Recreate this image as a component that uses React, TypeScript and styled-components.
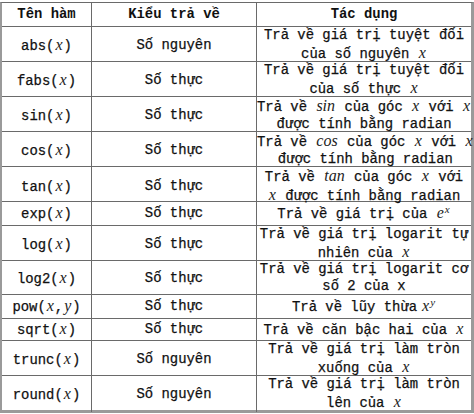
import React from 'react';
import styled, { createGlobalStyle } from 'styled-components';

const GlobalStyle = createGlobalStyle`
  html, body {
    margin: 0;
    padding: 0;
    background: #ffffff;
  }
`;

type Seg = string | { m: string; sup?: string; gap?: boolean };

type Row = {
  name: Seg[];
  kind: string;
  desc: Seg[][];
  h: number;
};

const X = { m: 'x' };

const rows: Row[] = [
  { name: ['abs(', X, ')'], kind: 'Số nguyên', desc: [['Trả về giá trị tuyệt đối'], ['của số nguyên ', X]], h: 35 },
  { name: ['fabs(', X, ')'], kind: 'Số thực', desc: [['Trả về giá trị tuyệt đối'], ['của số thực ', X]], h: 35 },
  { name: ['sin(', X, ')'], kind: 'Số thực', desc: [['Trả về ', { m: 'sin' }, ' của góc ', X, ' với ', X], ['được tính bằng radian']], h: 35 },
  { name: ['cos(', X, ')'], kind: 'Số thực', desc: [['Trả về ', { m: 'cos' }, ' của góc ', X, ' với ', X], ['được tính bằng radian']], h: 35 },
  { name: ['tan(', X, ')'], kind: 'Số thực', desc: [['Trả về ', { m: 'tan' }, ' của góc ', X, ' với'], [X, ' được tính bằng radian']], h: 35 },
  { name: ['exp(', X, ')'], kind: 'Số thực', desc: [['Trả về giá trị của ', { m: 'e', sup: 'x' }]], h: 24 },
  { name: ['log(', X, ')'], kind: 'Số thực', desc: [['Trả về giá trị logarit tự'], ['nhiên của ', X]], h: 35 },
  { name: ['log2(', X, ')'], kind: 'Số thực', desc: [['Trả về giá trị logarit cơ'], ['số 2 của x']], h: 34 },
  { name: ['pow(', X, ',', { m: 'y' }, ')'], kind: 'Số thực', desc: [['Trả về lũy thừa', { m: 'x', sup: 'y', gap: true }]], h: 24 },
  { name: ['sqrt(', X, ')'], kind: 'Số thực', desc: [['Trả về căn bậc hai của ', X]], h: 22 },
  { name: ['trunc(', X, ')'], kind: 'Số nguyên', desc: [['Trả về giá trị làm tròn'], ['xuống của ', X]], h: 35 },
  { name: ['round(', X, ')'], kind: 'Số nguyên', desc: [['Trả về giá trị làm tròn'], ['lên của ', X]], h: 35 },
];

const Frame = styled.div`
  width: 474px;
  height: 414px;
  box-sizing: border-box;
  padding-top: 2px;
  background: #ffffff;
  font-family: 'Liberation Mono', 'DejaVu Sans Mono', monospace;
  font-size: 13.9px;
  color: #111111;
`;

const Table = styled.div`
  display: flex;
  flex-direction: column;
  border-top: 1px solid #6a6a6a;
  border-left: 2px solid #9a9a9a;
  border-right: 3px solid #9a9a9a;
  border-bottom: 3px solid #9a9a9a;
`;

const TableRow = styled.div<{ $h: number }>`
  display: grid;
  grid-template-columns: 90px 165px 1fr;
  height: ${(p) => p.$h}px;
  box-sizing: border-box;
  border-bottom: 1px solid #6a6a6a;

  &:last-child {
    border-bottom: none;
    height: ${(p) => p.$h - 1}px;
  }
`;

const Cell = styled.div<{ $bold?: boolean; $last?: boolean }>`
  display: flex;
  flex-direction: column;
  align-items: center;
  justify-content: center;
  text-align: center;
  line-height: 17px;
  white-space: pre;
  font-weight: ${(p) => (p.$bold ? 700 : 400)};
  -webkit-text-stroke: ${(p) => (p.$bold ? '0' : '0.25px #111111')};
  border-right: ${(p) => (p.$last ? 'none' : '1px solid #6a6a6a')};
`;

const Line = styled.div`
  white-space: pre;
`;

const Math = styled.span<{ $gap?: boolean }>`
  font-family: 'Liberation Serif', 'DejaVu Serif', serif;
  font-style: italic;
  font-size: 16px;
  padding: 0 1px;
  margin-left: ${(p) => (p.$gap ? '4px' : '0')};
  -webkit-text-stroke: 0;
  color: #222222;
`;

const Sup = styled.sup`
  font-size: 11px;
  vertical-align: 5px;
  line-height: 0;
  margin-left: 1px;
`;

const renderSegs = (segs: Seg[]) =>
  segs.map((s, i) =>
    typeof s === 'string' ? (
      <React.Fragment key={i}>{s}</React.Fragment>
    ) : (
      <Math key={i} $gap={s.gap}>
        {s.m}
        {s.sup && <Sup>{s.sup}</Sup>}
      </Math>
    )
  );

const App = () => {
  return (
    <>
      <GlobalStyle />
      <Frame>
        <Table>
          <TableRow $h={24}>
            <Cell $bold>Tên hàm</Cell>
            <Cell $bold>Kiểu trả về</Cell>
            <Cell $bold $last>
              Tác dụng
            </Cell>
          </TableRow>
          {rows.map((r, i) => (
            <TableRow key={i} $h={r.h}>
              <Cell>
                <Line>{renderSegs(r.name)}</Line>
              </Cell>
              <Cell>{r.kind}</Cell>
              <Cell $last>
                {r.desc.map((line, j) => (
                  <Line key={j}>{renderSegs(line)}</Line>
                ))}
              </Cell>
            </TableRow>
          ))}
        </Table>
      </Frame>
    </>
  );
};

export default App;
